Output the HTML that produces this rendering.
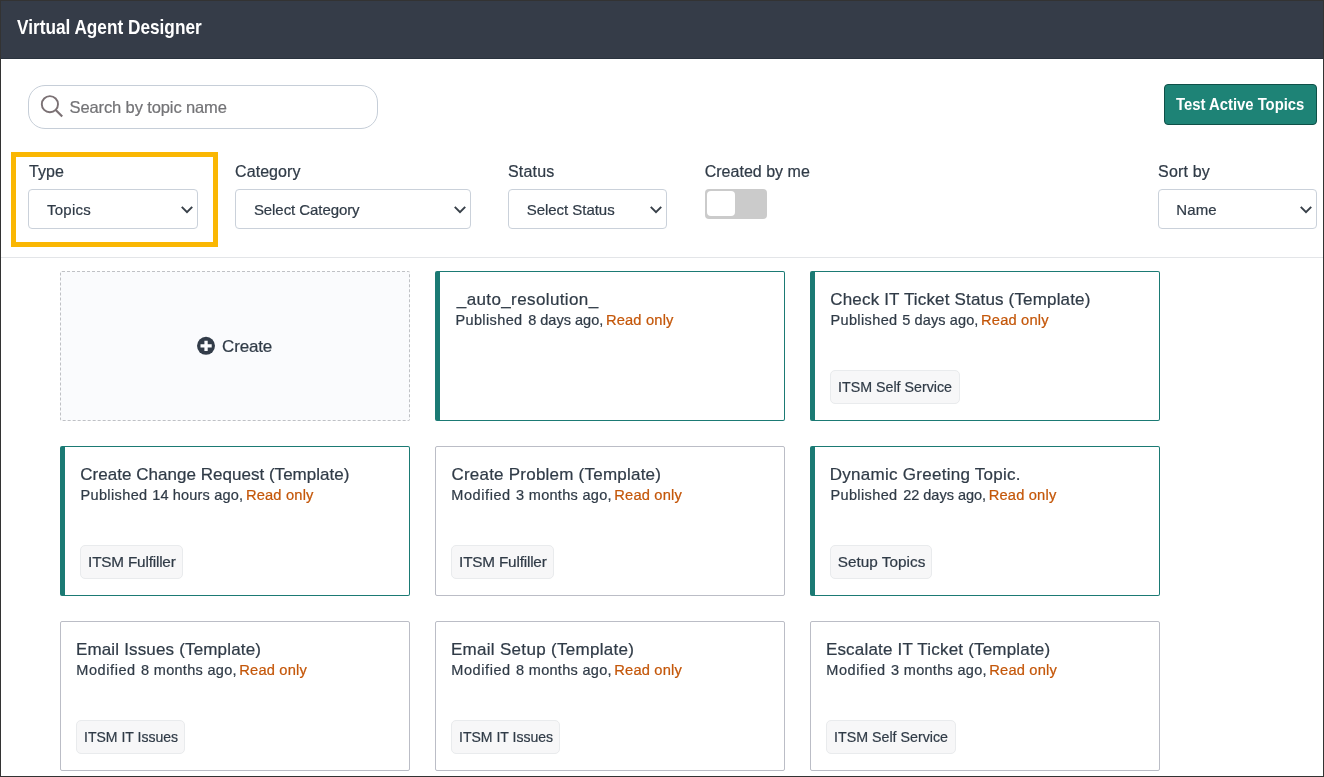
<!DOCTYPE html>
<html><head><meta charset="utf-8"><title>Virtual Agent Designer</title>
<style>
html,body{margin:0;padding:0;background:#fff;}
body{width:1324px;height:777px;overflow:hidden;position:relative;font-family:"Liberation Sans",sans-serif;}
.a{position:absolute;box-sizing:border-box;}
#tx{left:0;top:0;width:1324px;height:777px;will-change:transform;}
.t{position:absolute;white-space:pre;line-height:40px;transform-origin:0 50%;display:block;-webkit-text-stroke:0.22px currentColor;}
.b{font-weight:700;-webkit-text-stroke:0;}
#frame{left:0;top:0;width:1324px;height:777px;border:1px solid #333;z-index:50;pointer-events:none;}
#hdr{left:0;top:0;width:1324px;height:59px;background:#353c48;border-bottom:1px solid #2a333e;}
#search{left:28px;top:85px;width:350px;height:44px;border:1px solid #c6ced8;border-radius:17px;background:#fff;}
#btn{left:1164px;top:84px;width:153px;height:41px;background:#1e8376;border:1px solid #0f5048;border-radius:4px;}
#hl{left:11px;top:152px;width:207px;height:95px;border:5px solid #fab703;}
.sel{top:189px;height:40px;border:1px solid #cad1da;border-radius:4px;background:#fff;}
#tog{left:705px;top:189px;width:62px;height:30px;background:#cbcbcb;border-radius:4px;}
#knob{left:707px;top:191px;width:28px;height:25px;background:#fff;border-radius:4px;}
#div{left:1px;top:257px;width:1322px;height:1px;background:#e3e5e8;}
.card{width:350px;height:150px;border:1px solid #bbbdc6;border-radius:2px;background:#fff;}
.pub{border-color:#1b7a74;border-left-width:5px;}
#create{left:60px;top:271px;width:350px;height:150px;border:1px dashed #bfc1c5;border-radius:2px;background:#fafbfd;}
.tag{height:34px;border:1px solid #e9ebed;border-radius:5px;background:#f7f7f8;}
</style></head><body>
<div class="a" id="hdr"></div>
<div class="a" id="search"></div>
<svg class="a" style="left:38px;top:92px" width="28" height="28" viewBox="0 0 28 28"><circle cx="11.9" cy="12.2" r="8.1" fill="none" stroke="#7b7174" stroke-width="1.9"/><path d="M17.7 18 L24.2 24.6" stroke="#7b7174" stroke-width="2.2" stroke-linecap="butt"/></svg>
<div class="a" id="btn"></div>
<div class="a" id="hl"></div>
<div class="a sel" style="left:28px;width:170px"></div>
<div class="a sel" style="left:235px;width:236px"></div>
<div class="a sel" style="left:508px;width:159px"></div>
<div class="a sel" style="left:1158px;width:159px"></div>
<div class="a" id="tog"></div><div class="a" id="knob"></div>
<div class="a" id="div"></div>
<div class="a" id="create"></div>
<svg class="a" style="left:196px;top:336px" width="20" height="20" viewBox="0 0 20 20"><circle cx="10" cy="9.8" r="9" fill="#323c49"/><path d="M10.05 4.7 V15.1 M4.5 9.9 H15.7" stroke="#fafbfd" stroke-width="3.3"/></svg>

<svg class="a" style="left:181.0px;top:206.4px" width="12" height="8" viewBox="0 0 12 8"><path d="M1.5 1.6 L6 6.1 L10.5 1.6" fill="none" stroke="#384049" stroke-width="2" stroke-linecap="square" stroke-linejoin="miter"/></svg>
<svg class="a" style="left:454.3px;top:206.4px" width="12" height="8" viewBox="0 0 12 8"><path d="M1.5 1.6 L6 6.1 L10.5 1.6" fill="none" stroke="#384049" stroke-width="2" stroke-linecap="square" stroke-linejoin="miter"/></svg>
<svg class="a" style="left:650.2px;top:206.4px" width="12" height="8" viewBox="0 0 12 8"><path d="M1.5 1.6 L6 6.1 L10.5 1.6" fill="none" stroke="#384049" stroke-width="2" stroke-linecap="square" stroke-linejoin="miter"/></svg>
<svg class="a" style="left:1300.3px;top:206.4px" width="12" height="8" viewBox="0 0 12 8"><path d="M1.5 1.6 L6 6.1 L10.5 1.6" fill="none" stroke="#384049" stroke-width="2" stroke-linecap="square" stroke-linejoin="miter"/></svg>
<div class="a card pub" style="left:435px;top:271px"></div>
<div class="a card pub" style="left:810px;top:271px"></div>
<div class="a tag" style="left:830px;top:370px;width:130px"></div>
<div class="a card pub" style="left:60px;top:446px"></div>
<div class="a tag" style="left:80px;top:545px;width:103px"></div>
<div class="a card" style="left:435px;top:446px"></div>
<div class="a tag" style="left:451px;top:545px;width:103px"></div>
<div class="a card pub" style="left:810px;top:446px"></div>
<div class="a tag" style="left:830px;top:545px;width:101.6px"></div>
<div class="a card" style="left:60px;top:621px"></div>
<div class="a tag" style="left:76px;top:720px;width:108.5px"></div>
<div class="a card" style="left:435px;top:621px"></div>
<div class="a tag" style="left:451px;top:720px;width:108.5px"></div>
<div class="a card" style="left:810px;top:621px"></div>
<div class="a tag" style="left:826px;top:720px;width:130px"></div>
<div class="a" id="tx">
<span class="t b" style="font-size:20.5px;color:#ffffff;transform:scaleX(0.8400);left:17.00px;top:7px;">Virtual Agent Designer</span>
<span class="t" style="font-size:16.5px;color:#737376;letter-spacing:-0.121px;left:69.60px;top:87px;">Search by topic name</span>
<span class="t b" style="font-size:16px;color:#ffffff;transform:scaleX(0.9275);left:1176.20px;top:85px;">Test Active Topics</span>
<span class="t" style="font-size:16px;color:#303b47;letter-spacing:0.067px;left:29.00px;top:152px;">Type</span>
<span class="t" style="font-size:16px;color:#303b47;letter-spacing:0.057px;left:235.10px;top:152px;">Category</span>
<span class="t" style="font-size:16px;color:#303b47;letter-spacing:0.220px;left:507.90px;top:152px;">Status</span>
<span class="t" style="font-size:16px;color:#303b47;letter-spacing:0.017px;left:704.70px;top:152px;">Created by me</span>
<span class="t" style="font-size:16px;color:#303b47;letter-spacing:0.167px;left:1158.10px;top:152px;">Sort by</span>
<span class="t" style="font-size:15px;color:#303b47;letter-spacing:0.240px;left:47.00px;top:190px;">Topics</span>
<span class="t" style="font-size:15px;color:#303b47;letter-spacing:-0.071px;left:253.90px;top:190px;">Select Category</span>
<span class="t" style="font-size:15px;color:#303b47;letter-spacing:-0.033px;left:526.70px;top:190px;">Select Status</span>
<span class="t" style="font-size:15px;color:#303b47;letter-spacing:0.133px;left:1176.30px;top:190px;">Name</span>
<span class="t" style="font-size:17px;color:#303b47;letter-spacing:-0.200px;left:222.10px;top:327px;">Create</span>
<span class="t" style="font-size:17px;color:#303b47;letter-spacing:0.387px;left:456.80px;top:280px;">_auto_resolution_</span>
<span class="t" style="font-size:14.5px;color:#303b47;letter-spacing:0.387px;left:455.40px;top:300px;">Published</span>
<span class="t" style="font-size:14.5px;color:#303b47;letter-spacing:0.010px;left:528.20px;top:300px;">8 days ago,</span>
<span class="t" style="font-size:14.7px;color:#c4570a;letter-spacing:0.175px;left:605.90px;top:300px;">Read only</span>
<span class="t" style="font-size:17px;color:#303b47;letter-spacing:0.166px;left:830.30px;top:280px;">Check IT Ticket Status (Template)</span>
<span class="t" style="font-size:14.5px;color:#303b47;letter-spacing:0.387px;left:830.40px;top:300px;">Published</span>
<span class="t" style="font-size:14.5px;color:#303b47;letter-spacing:0.120px;left:902.20px;top:300px;">5 days ago,</span>
<span class="t" style="font-size:14.7px;color:#c4570a;letter-spacing:0.175px;left:981.00px;top:300px;">Read only</span>
<span class="t" style="font-size:15.3px;color:#303b47;transform:scaleX(0.9314);left:838.17px;top:367px;">ITSM Self Service</span>
<span class="t" style="font-size:17px;color:#303b47;letter-spacing:0.026px;left:80.30px;top:455px;">Create Change Request (Template)</span>
<span class="t" style="font-size:14.5px;color:#303b47;letter-spacing:0.387px;left:80.40px;top:475px;">Published</span>
<span class="t" style="font-size:14.5px;color:#303b47;letter-spacing:0.175px;left:152.20px;top:475px;">14 hours ago,</span>
<span class="t" style="font-size:14.7px;color:#c4570a;letter-spacing:0.175px;left:245.90px;top:475px;">Read only</span>
<span class="t" style="font-size:15.3px;color:#303b47;letter-spacing:-0.185px;left:88.10px;top:542px;">ITSM Fulfiller</span>
<span class="t" style="font-size:17px;color:#303b47;letter-spacing:0.229px;left:451.40px;top:455px;">Create Problem (Template)</span>
<span class="t" style="font-size:14.5px;color:#303b47;letter-spacing:0.586px;left:451.25px;top:475px;">Modified</span>
<span class="t" style="font-size:14.5px;color:#303b47;letter-spacing:0.304px;left:516.05px;top:475px;">3 months ago,</span>
<span class="t" style="font-size:14.7px;color:#c4570a;letter-spacing:0.175px;left:614.30px;top:475px;">Read only</span>
<span class="t" style="font-size:15.3px;color:#303b47;letter-spacing:-0.185px;left:459.10px;top:542px;">ITSM Fulfiller</span>
<span class="t" style="font-size:17px;color:#303b47;letter-spacing:0.268px;left:829.80px;top:455px;">Dynamic Greeting Topic.</span>
<span class="t" style="font-size:14.5px;color:#303b47;letter-spacing:0.387px;left:830.40px;top:475px;">Published</span>
<span class="t" style="font-size:14.5px;color:#303b47;letter-spacing:-0.009px;left:903.20px;top:475px;">22 days ago,</span>
<span class="t" style="font-size:14.7px;color:#c4570a;letter-spacing:0.175px;left:988.70px;top:475px;">Read only</span>
<span class="t" style="font-size:15.3px;color:#303b47;letter-spacing:0.036px;left:837.70px;top:542px;">Setup Topics</span>
<span class="t" style="font-size:17px;color:#303b47;letter-spacing:0.168px;left:75.90px;top:630px;">Email Issues (Template)</span>
<span class="t" style="font-size:14.5px;color:#303b47;letter-spacing:0.586px;left:76.25px;top:650px;">Modified</span>
<span class="t" style="font-size:14.5px;color:#303b47;letter-spacing:0.304px;left:141.05px;top:650px;">8 months ago,</span>
<span class="t" style="font-size:14.7px;color:#c4570a;letter-spacing:0.175px;left:239.30px;top:650px;">Read only</span>
<span class="t" style="font-size:15.3px;color:#303b47;transform:scaleX(0.9178);left:84.18px;top:717px;">ITSM IT Issues</span>
<span class="t" style="font-size:17px;color:#303b47;letter-spacing:0.305px;left:450.90px;top:630px;">Email Setup (Template)</span>
<span class="t" style="font-size:14.5px;color:#303b47;letter-spacing:0.586px;left:451.25px;top:650px;">Modified</span>
<span class="t" style="font-size:14.5px;color:#303b47;letter-spacing:0.304px;left:516.05px;top:650px;">8 months ago,</span>
<span class="t" style="font-size:14.7px;color:#c4570a;letter-spacing:0.175px;left:614.30px;top:650px;">Read only</span>
<span class="t" style="font-size:15.3px;color:#303b47;transform:scaleX(0.9178);left:459.18px;top:717px;">ITSM IT Issues</span>
<span class="t" style="font-size:17px;color:#303b47;letter-spacing:0.193px;left:825.90px;top:630px;">Escalate IT Ticket (Template)</span>
<span class="t" style="font-size:14.5px;color:#303b47;letter-spacing:0.586px;left:826.25px;top:650px;">Modified</span>
<span class="t" style="font-size:14.5px;color:#303b47;letter-spacing:0.304px;left:891.05px;top:650px;">3 months ago,</span>
<span class="t" style="font-size:14.7px;color:#c4570a;letter-spacing:0.175px;left:989.30px;top:650px;">Read only</span>
<span class="t" style="font-size:15.3px;color:#303b47;transform:scaleX(0.9314);left:834.17px;top:717px;">ITSM Self Service</span>
</div>
<div class="a" id="frame"></div>
</body></html>
